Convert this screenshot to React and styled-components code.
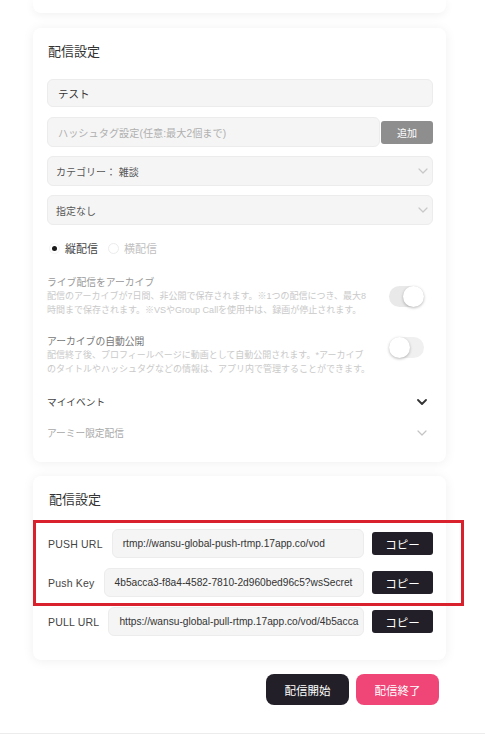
import { styled, createGlobalStyle } from 'styled-components';

const GlobalStyle = createGlobalStyle`
  html, body {
    margin: 0;
    padding: 0;
    background: #ffffff;
  }
  body {
    font-family: "Liberation Sans", "Noto Sans CJK JP", sans-serif;
    color: #333;
  }
  * { box-sizing: border-box; }
`;

function Chevron({ color = '#c8c8c8', weight = 1.2 }) {
  return (
    <svg width="10" height="6" viewBox="0 0 10 6">
      <polyline points="1,1 5,5 9,1" fill="none" stroke={color} strokeWidth={weight} strokeLinecap="round" strokeLinejoin="round" />
    </svg>
  );
}

function UrlRow({ label, value }) {
  return (
    <UrlLine>
      <UrlLabel>{label}</UrlLabel>
      <UrlField>{value}</UrlField>
      <CopyButton>コピー</CopyButton>
    </UrlLine>
  );
}

export default function App() {
  return (
    <>
      <GlobalStyle />
      <Page>
        <TopCard />

        <Card>
          <CardTitle>配信設定</CardTitle>
          <TextField>テスト</TextField>

          <HashRow>
            <HashField>ハッシュタグ設定(任意:最大2個まで)</HashField>
            <AddButton>追加</AddButton>
          </HashRow>

          <Select>
            <span>カテゴリー： 雑談</span>
            <Chevron />
          </Select>
          <Select>
            <span>指定なし</span>
            <Chevron />
          </Select>

          <RadioRow>
            <RadioItem>
              <RadioDot $checked />
              <RadioText>縦配信</RadioText>
            </RadioItem>
            <RadioItem>
              <RadioDot />
              <RadioText $muted>横配信</RadioText>
            </RadioItem>
          </RadioRow>

          <SwitchBlock>
            <SwitchText>
              <SwitchTitle>ライブ配信をアーカイブ</SwitchTitle>
              <SwitchDesc>
                配信のアーカイブが7日間、非公開で保存されます。※1つの配信につき、最大8時間まで保存されます。※VSやGroup Callを使用中は、録画が停止されます。
              </SwitchDesc>
            </SwitchText>
            <Toggle $on><Knob $on /></Toggle>
          </SwitchBlock>

          <SwitchBlock $second>
            <SwitchText>
              <SwitchTitle $dark>アーカイブの自動公開</SwitchTitle>
              <SwitchDesc>
                配信終了後、プロフィールページに動画として自動公開されます。*アーカイブのタイトルやハッシュタグなどの情報は、アプリ内で管理することができます。
              </SwitchDesc>
            </SwitchText>
            <Toggle><Knob /></Toggle>
          </SwitchBlock>

          <ExpandList>
            <ExpandRow>
              <span>マイイベント</span>
              <Chevron color="#333" weight={1.8} />
            </ExpandRow>
            <ExpandRow $muted>
              <span>アーミー限定配信</span>
              <Chevron color="#c4c4c4" />
            </ExpandRow>
          </ExpandList>
        </Card>

        <Card $stream>
          <CardTitle>配信設定</CardTitle>
          <UrlList>
            <UrlRow label="PUSH URL" value="rtmp://wansu-global-push-rtmp.17app.co/vod" />
            <UrlRow label="Push Key" value="4b5acca3-f8a4-4582-7810-2d960bed96c5?wsSecret" />
            <UrlRow label="PULL URL" value="https://wansu-global-pull-rtmp.17app.co/vod/4b5acca" />
          </UrlList>
          <Highlight />
        </Card>

        <Actions>
          <ActionButton>配信開始</ActionButton>
          <ActionButton $pink>配信終了</ActionButton>
        </Actions>
      </Page>
      <Footer />
    </>
  );
}

const Page = styled.div`
  width: 413px;
  margin-left: 33px;
  display: flex;
  flex-direction: column;
`;

const TopCard = styled.div`
  height: 13px;
  background: #fff;
  border-radius: 0 0 8px 8px;
  box-shadow: 0 2px 10px rgba(0, 0, 0, 0.06);
`;

const Card = styled.section`
  position: relative;
  margin-top: ${p => (p.$stream ? '14px' : '15px')};
  background: #fff;
  border-radius: 8px;
  box-shadow: 0 1px 12px rgba(0, 0, 0, 0.065);
  padding: ${p => (p.$stream ? '13px 14px 24px 15px' : '13px 13px 14px 14px')};
  display: flex;
  flex-direction: column;
`;

const CardTitle = styled.h2`
  margin: 0 0 0 1px;
  font-size: 13px;
  line-height: 22px;
  font-weight: 400;
  color: #333;
`;

const fieldBase = `
  background: #f5f5f5;
  border: 1px solid #ececec;
  border-radius: 6px;
  display: flex;
  align-items: center;
  white-space: nowrap;
  overflow: hidden;
`;

const TextField = styled.div`
  ${fieldBase}
  margin-top: 16px;
  height: 28px;
  padding: 0 10px;
  font-size: 10.5px;
  color: #333;
`;

const HashRow = styled.div`
  margin-top: 10px;
  display: flex;
  align-items: center;
  gap: 1px;
`;

const HashField = styled.div`
  ${fieldBase}
  flex: 1;
  height: 30px;
  padding: 0 10px;
  font-size: 10.2px;
  color: #b0b0b0;
`;

const AddButton = styled.div`
  width: 52px;
  height: 23px;
  background: #8e8e8e;
  border-radius: 3px;
  color: #fff;
  font-size: 10px;
  display: flex;
  align-items: center;
  justify-content: center;
`;

const Select = styled.div`
  ${fieldBase}
  margin-top: 9px;
  height: 30px;
  padding: 0 4px 0 8px;
  justify-content: space-between;
  color: #555;
  font-size: 10px;
`;

const RadioRow = styled.div`
  margin-top: 13px;
  height: 20px;
  display: flex;
  align-items: center;
  gap: 10px;
  padding-left: 2px;
`;

const RadioItem = styled.div`
  display: flex;
  align-items: center;
  gap: 5px;
`;

const RadioDot = styled.span`
  width: 11px;
  height: 11px;
  border-radius: 50%;
  border: 1px solid ${p => (p.$checked ? '#f4f4f4' : '#ececec')};
  display: flex;
  align-items: center;
  justify-content: center;
  &::after {
    content: '';
    width: 5px;
    height: 5px;
    border-radius: 50%;
    background: ${p => (p.$checked ? '#1a1a1a' : 'transparent')};
  }
`;

const RadioText = styled.span`
  font-size: 11px;
  color: ${p => (p.$muted ? '#c0c0c0' : '#444')};
`;

const SwitchBlock = styled.div`
  margin-top: 18px;
  display: flex;
  align-items: ${p => (p.$second ? 'flex-start' : 'center')};
  justify-content: space-between;
`;

const SwitchText = styled.div`
  flex: none;
  width: 324px;
  display: flex;
  flex-direction: column;
`;

const SwitchTitle = styled.div`
  font-size: 9.8px;
  line-height: 14px;
  color: ${p => (p.$dark ? '#777' : '#999')};
`;

const SwitchDesc = styled.div`
  font-size: 9px;
  line-height: 13.5px;
  color: #c9c9c9;
`;

const Toggle = styled.div`
  flex: none;
  width: 35px;
  height: 21px;
  margin-right: 9px;
  margin-top: ${p => (p.$on ? '0' : '2px')};
  border-radius: 11px;
  background: ${p => (p.$on ? '#e9e9e9' : '#f0f0f0')};
  display: flex;
  align-items: center;
  justify-content: ${p => (p.$on ? 'flex-end' : 'flex-start')};
`;

const Knob = styled.span`
  width: 21px;
  height: 21px;
  border-radius: 50%;
  background: #fff;
  box-shadow: 0 1px 3px rgba(0, 0, 0, 0.28);
`;

const ExpandList = styled.div`
  margin-top: 10px;
  display: flex;
  flex-direction: column;
`;

const ExpandRow = styled.div`
  height: 31px;
  display: flex;
  align-items: center;
  justify-content: space-between;
  padding: 0 6px 0 0;
  font-size: 9.7px;
  color: ${p => (p.$muted ? '#a8a8a8' : '#444')};
`;

const UrlList = styled.div`
  margin-top: 18px;
  display: flex;
  flex-direction: column;
  gap: 10px;
`;

const UrlLine = styled.div`
  display: flex;
  align-items: center;
`;

const UrlLabel = styled.span`
  flex: none;
  font-size: 10.5px;
  color: #444;
  margin-right: 9px;
  letter-spacing: 0.2px;
`;

const UrlField = styled.div`
  ${fieldBase}
  flex: 1;
  height: 29px;
  padding: 0 4px 0 10px;
  font-size: 10.2px;
  color: #333;
`;

const CopyButton = styled.div`
  flex: none;
  width: 61px;
  height: 23px;
  margin-left: 8px;
  margin-right: -1px;
  background: #221f28;
  border-radius: 3px;
  color: #fff;
  font-size: 11.5px;
  display: flex;
  align-items: center;
  justify-content: center;
`;

const Highlight = styled.div`
  position: absolute;
  left: 0;
  top: 44px;
  width: 431px;
  height: 86px;
  border: 3px solid #d8212d;
  pointer-events: none;
`;

const Actions = styled.div`
  margin-top: 14px;
  margin-right: 7px;
  display: flex;
  justify-content: flex-end;
  gap: 7px;
`;

const ActionButton = styled.button`
  width: 83px;
  height: 31px;
  border: none;
  border-radius: 8px;
  background: ${p => (p.$pink ? '#ef4677' : '#221f28')};
  color: #fff;
  font-family: "Liberation Sans", "Noto Sans CJK JP", sans-serif;
  font-size: 11.5px;
`;

const Footer = styled.div`
  margin-top: 28px;
  height: 1px;
  background: #ececec;
`;
